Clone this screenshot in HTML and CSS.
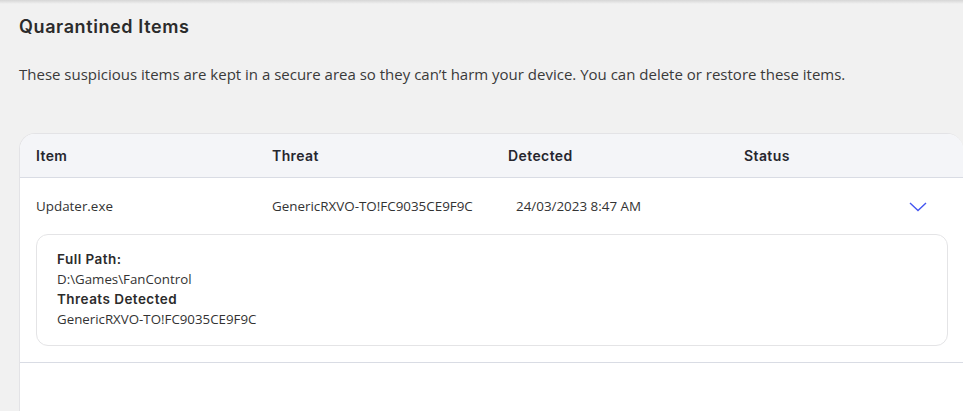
FILE: index.html
```html
<!DOCTYPE html>
<html>
<head>
<meta charset="utf-8">
<link rel="stylesheet" href="styles.css">
</head>
<body>
<div class="topshade"></div>
<main class="page">
  <h1 class="title">Quarantined Items</h1>
  <p class="intro">These suspicious items are kept in a secure area so they can’t harm your device. You can delete or restore these items.</p>
  <section class="card">
    <div class="thead">
      <div class="th">Item</div>
      <div class="th">Threat</div>
      <div class="th">Detected</div>
      <div class="th">Status</div>
    </div>
    <div class="row">
      <div class="td">Updater.exe</div>
      <div class="td">GenericRXVO-TO!FC9035CE9F9C</div>
      <div class="td detected">24/03/2023 8:47 AM</div>
      <div class="td status"></div>
      <div class="toggle">
        <svg width="18" height="10" viewBox="0 0 18 10"><path d="M1 1 L9 8.5 L17 1" fill="none" stroke="#4456f0" stroke-width="1.4"/></svg>
      </div>
    </div>
    <div class="details-wrap">
      <div class="details">
        <div class="dlabel">Full Path:</div>
        <div class="dvalue">D:\Games\FanControl</div>
        <div class="dlabel">Threats Detected</div>
        <div class="dvalue">GenericRXVO-TO!FC9035CE9F9C</div>
      </div>
    </div>
  </section>
</main>
</body>
</html>
```
FILE: styles.css
```css
html, body {
  margin: 0;
  padding: 0;
  background: #f1f1f1;
  height: 100%;
  overflow: hidden;
}
.topshade {
  height: 4px;
  background: linear-gradient(#d6d6d6, #f1f1f1);
  position: absolute;
  left: 0; right: 0; top: 0;
}
.page {
  padding: 15px 0 0 19px;
  font-family: "Open Sans", "Noto Sans", sans-serif;
  color: #333;
}
.title {
  margin: 0;
  font-family: Inter, "DejaVu Sans", sans-serif;
  font-weight: 600;
  font-size: 18px;
  line-height: 24px;
  color: #2b2b2b;
  letter-spacing: 0.6px;
}
.intro {
  margin: 25px 0 0 0;
  font-size: 15px;
  line-height: 20px;
  color: #3a3a3a;
}
.card {
  margin-top: 49px;
  background: #fff;
  border: 1px solid #e3e3e6;
  border-right: none;
  border-radius: 16px 16px 0 0;
  height: 300px;
  overflow: hidden;
}
.thead {
  display: grid;
  grid-template-columns: 236px 236px 236px 1fr;
  height: 43px;
  align-items: center;
  background: #f4f5f8;
  border-bottom: 1px solid #d9dce4;
  padding-left: 16px;
}
.th {
  font-family: Inter, "DejaVu Sans", sans-serif;
  font-weight: 600;
  font-size: 14px;
  letter-spacing: 0.4px;
  color: #26262e;
}
.row {
  display: grid;
  grid-template-columns: 236px 236px 236px 1fr 60px;
  height: 56px;
  align-items: center;
  padding-left: 16px;
  font-size: 13.4px;
  color: #333;
}
.detected { padding-left: 8px; }
.toggle {
  display: flex;
  align-items: center;
  justify-content: flex-start;
  padding-left: 6px;
  padding-top: 1px;
}
.toggle svg { display: block; }
.details-wrap {
  padding: 0 15px 16px 16px;
  border-bottom: 1px solid #d9dce4;
}
.details {
  border: 1px solid #e4e4e6;
  border-radius: 12px;
  padding: 14px 20px 16px 20px;
  font-size: 13.3px;
  line-height: 20px;
}
.dlabel {
  font-family: Inter, "DejaVu Sans", sans-serif;
  font-weight: 600;
  font-size: 13.5px;
  letter-spacing: 0.45px;
  color: #2b2b2b;
}
.dvalue {
  color: #333;
}
```
